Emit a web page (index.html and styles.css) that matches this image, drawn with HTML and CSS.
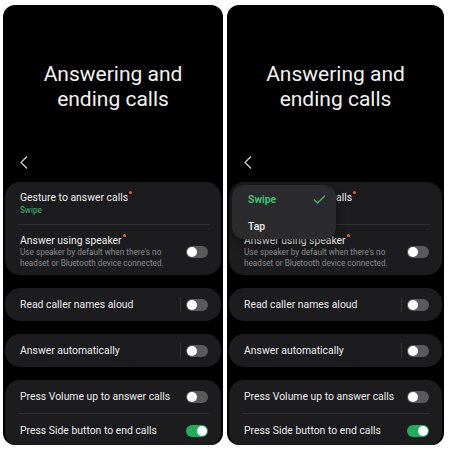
FILE: index.html
```html
<!DOCTYPE html>
<html>
<head>
<meta charset="utf-8">
<link rel="stylesheet" href="styles.css">
</head>
<body>
<div class="screens">
  <div class="phone phone-left">
    <h1 class="title">Answering and<br>ending calls</h1>
    <div class="back"><svg width="8" height="13" viewBox="0 0 8 13"><polyline points="7,0.5 1,6.5 7,12.5" fill="none" stroke="#d8d8d8" stroke-width="1.2"/></svg></div>
    <div class="card">
      <div class="row row-pick">
        <div class="text"><div class="label">Gesture to answer calls<span class="dot"></span></div><div class="value">Swipe</div></div>
      </div>
      <div class="divider"></div>
      <div class="row row-sub">
        <div class="text"><div class="label">Answer using speaker<span class="dot"></span></div><div class="sub">Use speaker by default when there's no<br>headset or Bluetooth device connected.</div></div>
        <span class="toggle"></span>
      </div>
    </div>
    <div class="card">
      <div class="row row-single">
        <div class="text"><div class="label">Read caller names aloud</div></div>
        <span class="vline"></span><span class="toggle"></span>
      </div>
    </div>
    <div class="card">
      <div class="row row-single">
        <div class="text"><div class="label">Answer automatically</div></div>
        <span class="vline"></span><span class="toggle"></span>
      </div>
    </div>
    <div class="card">
      <div class="row row-single">
        <div class="text"><div class="label">Press Volume up to answer calls</div></div>
        <span class="toggle"></span>
      </div>
      <div class="divider"></div>
      <div class="row row-single">
        <div class="text"><div class="label">Press Side button to end calls</div></div>
        <span class="toggle on"></span>
      </div>
    </div>
  </div>

  <div class="phone phone-right">
    <h1 class="title">Answering and<br>ending calls</h1>
    <div class="back"><svg width="8" height="13" viewBox="0 0 8 13"><polyline points="7,0.5 1,6.5 7,12.5" fill="none" stroke="#d8d8d8" stroke-width="1.2"/></svg></div>
    <div class="card">
      <div class="row row-pick">
        <div class="text"><div class="label">Gesture to answer calls<span class="dot"></span></div><div class="value">Swipe</div></div>
      </div>
      <div class="divider"></div>
      <div class="row row-sub">
        <div class="text"><div class="label">Answer using speaker<span class="dot"></span></div><div class="sub">Use speaker by default when there's no<br>headset or Bluetooth device connected.</div></div>
        <span class="toggle"></span>
      </div>
    </div>
    <div class="card">
      <div class="row row-single">
        <div class="text"><div class="label">Read caller names aloud</div></div>
        <span class="vline"></span><span class="toggle"></span>
      </div>
    </div>
    <div class="card">
      <div class="row row-single">
        <div class="text"><div class="label">Answer automatically</div></div>
        <span class="vline"></span><span class="toggle"></span>
      </div>
    </div>
    <div class="card">
      <div class="row row-single">
        <div class="text"><div class="label">Press Volume up to answer calls</div></div>
        <span class="toggle"></span>
      </div>
      <div class="divider"></div>
      <div class="row row-single">
        <div class="text"><div class="label">Press Side button to end calls</div></div>
        <span class="toggle on"></span>
      </div>
    </div>

    <div class="popup">
      <div class="popup-item selected"><span>Swipe</span><svg width="13" height="9" viewBox="0 0 13 9"><polyline points="1,4.5 4.5,8 12,0.8" fill="none" stroke="#3fb873" stroke-width="1.3"/></svg></div>
      <div class="popup-item"><span>Tap</span></div>
    </div>
  </div>
</div>
</body>
</html>
```

FILE: styles.css
```css
html, body {
  margin: 0;
  padding: 0;
  background: #ffffff;
}

body {
  font-family: Roboto, "Noto Sans", sans-serif;
  width: 450px;
  height: 450px;
  overflow: hidden;
}

.screens {
  display: flex;
  gap: 4px;
  padding: 5px 0 0 3px;
}

.phone {
  position: relative;
  height: 440px;
  background: #000;
  border-radius: 12px;
  overflow: hidden;
}

.phone-left { width: 220px; }
.phone-right { width: 217px; }

.title {
  margin: 0;
  padding-top: 57px;
  font-size: 21px;
  line-height: 25px;
  font-weight: 400;
  color: #f2f2f2;
  text-align: center;
}

.back {
  margin: 43px 0 0 17px;
  height: 14px;
  display: flex;
  align-items: center;
}

.card {
  margin: 13px 2px 0;
  background: #1c1c1e;
  border-radius: 15px;
}

.row {
  display: flex;
  align-items: center;
  padding: 0 13px 0 15px;
}

.row-pick {
  padding-top: 9px;
  padding-bottom: 8px;
  align-items: flex-start;
}

.row-sub {
  padding-top: 9px;
  padding-bottom: 6px;
}

.row-single {
  height: 33px;
}

.text {
  flex: 1;
  min-width: 0;
}

.label {
  font-size: 10.4px;
  line-height: 13px;
  color: #ececec;
  white-space: nowrap;
}

.dot {
  display: inline-block;
  width: 3px;
  height: 3px;
  border-radius: 50%;
  background: #e8612e;
  margin-left: 1px;
  vertical-align: 7px;
}

.value {
  margin-top: 1px;
  font-size: 8.2px;
  line-height: 11px;
  color: #3fbf78;
}

.sub {
  font-size: 8.2px;
  line-height: 11px;
  color: #8a8a8a;
  white-space: nowrap;
}

.divider {
  height: 1px;
  margin: 0 12px 0 13px;
  background: #303032;
}

.vline {
  width: 1px;
  height: 15px;
  background: #333335;
  margin-right: 5px;
}

.toggle {
  position: relative;
  flex: none;
  width: 22px;
  height: 12px;
  border-radius: 6px;
  background: #5a5a5c;
}

.toggle::after {
  content: "";
  position: absolute;
  top: 1px;
  left: 1px;
  width: 10px;
  height: 10px;
  border-radius: 50%;
  background: #ffffff;
}

.toggle.on {
  background: #1fae5c;
}

.toggle.on::after {
  left: 11px;
}

.popup {
  position: absolute;
  left: 5px;
  top: 180px;
  width: 104px;
  height: 54px;
  background: #2b2b2d;
  border-radius: 12px;
  box-shadow: 0 2px 8px rgba(0, 0, 0, 0.5);
}

.popup-item {
  display: flex;
  align-items: center;
  justify-content: space-between;
  height: 27px;
  padding: 0 10px 0 16px;
  font-size: 10.4px;
  color: #f0f0f0;
  font-weight: 500;
}

.popup-item:first-child {
  margin-top: 1px;
}

.popup-item.selected {
  color: #3fbf78;
  font-weight: 700;
}
```
